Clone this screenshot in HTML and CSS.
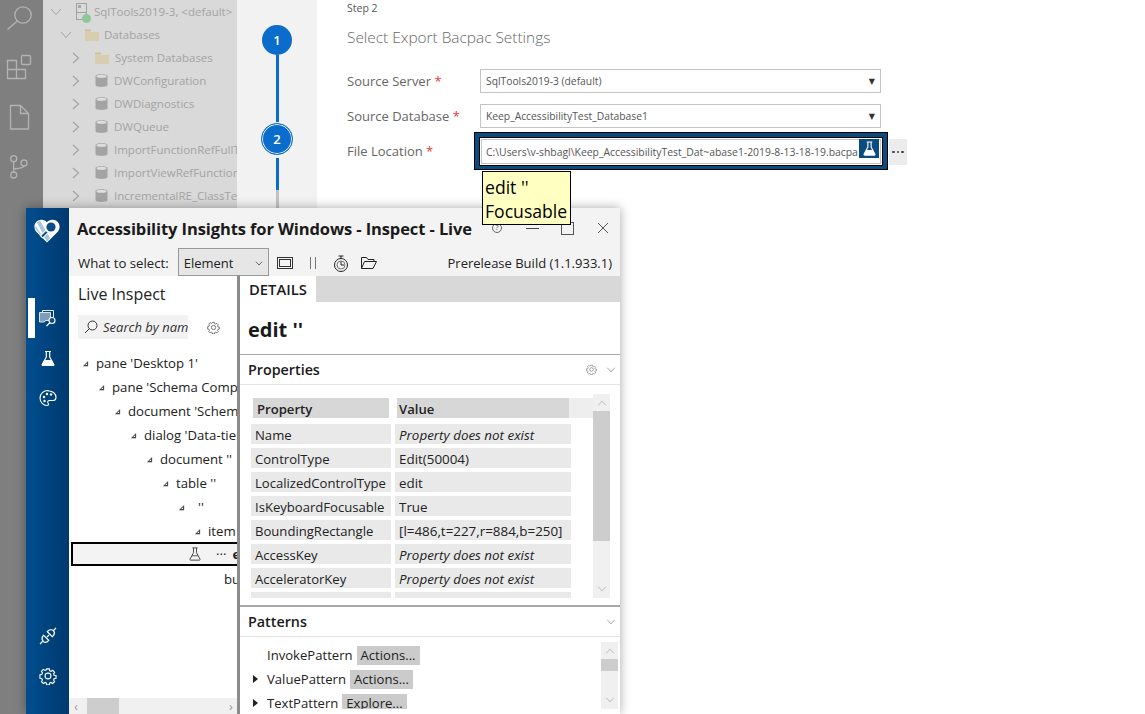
FILE: index.html
```html
<!DOCTYPE html>
<html lang="en">
<head>
<meta charset="utf-8">
<title>Accessibility Insights</title>
<link rel="stylesheet" href="styles.css">
</head>
<body>
<svg class="defs" width="0" height="0">
  <symbol id="flask" viewBox="0 0 16 16"><path d="M4.600 9.500h6.800l2.300 4.300c.3.600 0 1.200-.7 1.200H3c-.7 0-1-.6-.7-1.200z" fill="currentColor"/><path d="M5 1h6M6.300 1v5.500L2.300 13.800c-.4.700 0 1.200.7 1.200h10c.7 0 1.100-.5.700-1.200L9.700 6.500V1" fill="none" stroke="currentColor" stroke-width="1.200"/></symbol>
  <symbol id="flask-line" viewBox="0 0 16 16"><path d="M4.600 10h6.800" stroke="currentColor" fill="none"/><path d="M5 1h6M6.300 1v5.500L2.300 13.800c-.4.700 0 1.200.7 1.200h10c.7 0 1.100-.5.700-1.200L9.700 6.500V1" fill="none" stroke="currentColor" stroke-width="1.100"/></symbol>
  <symbol id="gear" viewBox="0 0 16 16"><path d="M6.600 1h2.800l.4 2 1.400.6 1.700-1.100 2 2-1.100 1.700.6 1.400 2 .4v2.800l-2 .4-.6 1.400 1.100 1.700-2 2-1.700-1.100-1.400.6-.4 2H6.600l-.4-2-1.400-.6-1.700 1.100-2-2 1.100-1.700-.6-1.400-2-.4V7l2-.4.6-1.400-1.100-1.700 2-2 1.700 1.100 1.400-.6z" transform="translate(1.200 .8) scale(.85)" fill="none" stroke="currentColor" stroke-width="1.150"/><circle cx="8" cy="8" r="2.600" fill="none" stroke="currentColor"/></symbol>
  <symbol id="cyl" viewBox="0 0 13 15"><path d="M.5 3C.5.500 12.500.500 12.500 3v9c0 2.500-12 2.500-12 0z" fill="#a3a3a3"/><ellipse cx="6.500" cy="3.200" rx="5" ry="1.500" fill="#dedede"/></symbol>
  <symbol id="folder" viewBox="0 0 14 12"><path d="M0 2h5l1 1h8v9H0z" fill="#d9cdb0"/><path d="M0 .5h5.500l1 1.500H0z" fill="#ccbf9f"/></symbol>
  <symbol id="tri" viewBox="0 0 8 8"><path d="M7 1v6H1z M5.800 3.600 3.600 5.800h2.200z" fill="#444" fill-rule="evenodd"/></symbol>
  <symbol id="chevR" viewBox="0 0 8 12"><path d="M1 1l5.500 5L1 11" fill="none" stroke="#a2a2a2" stroke-width="1.100"/></symbol>
  <symbol id="chevD" viewBox="0 0 12 8"><path d="M1 1l5 5.500L11 1" fill="none" stroke="currentColor" stroke-width="1"/></symbol>
</svg>

<div class="desktop">
  <aside class="activity">
    <svg class="act-icon" width="43" height="50" viewBox="0 0 43 50"><circle cx="23" cy="15" r="8.200"/><path d="M17.300 21 7.500 29.500"/></svg>
    <svg class="act-icon" width="43" height="50" viewBox="0 0 43 50"><path d="M7.500 10.500h9v18h-9zM7.500 19.500h18v9h-9"/><rect x="21.500" y="5.500" width="9" height="9" rx="1"/><path d="M16.500 10.500"/></svg>
    <svg class="act-icon" width="43" height="50" viewBox="0 0 43 50"><path d="M10.500 5.500h10l8 8v15.500h-18zM20.500 5.500v8h8"/></svg>
    <svg class="act-icon" width="43" height="50" viewBox="0 0 43 50"><circle cx="13.700" cy="8.700" r="3"/><circle cx="24" cy="13" r="3"/><circle cx="13.700" cy="25" r="3"/><path d="M13.700 11.700v10.300M14 18.800c5-.3 9.800-.5 10-2.800"/></svg>
  </aside>

  <nav class="tree">
    <div class="t-row t-server"><svg class="chev" width="12" height="8"><use href="#chevD"/></svg><span class="server-ic"><i class="srv-slot"></i><i class="srv-mid"></i><i class="dot"></i></span><span>SqlTools2019-3, &lt;default&gt;</span></div>
    <div class="t-row t-db"><svg class="chev" width="12" height="8"><use href="#chevD"/></svg><svg class="ic" width="14" height="12"><use href="#folder"/></svg><span>Databases</span></div>
    <div class="t-row t-item"><svg class="chev" width="8" height="12"><use href="#chevR"/></svg><svg class="ic" width="14" height="12"><use href="#folder"/></svg><span>System Databases</span></div>
    <div class="t-row t-item"><svg class="chev" width="8" height="12"><use href="#chevR"/></svg><svg class="ic db" width="13" height="15"><use href="#cyl"/></svg><span>DWConfiguration</span></div>
    <div class="t-row t-item"><svg class="chev" width="8" height="12"><use href="#chevR"/></svg><svg class="ic db" width="13" height="15"><use href="#cyl"/></svg><span>DWDiagnostics</span></div>
    <div class="t-row t-item"><svg class="chev" width="8" height="12"><use href="#chevR"/></svg><svg class="ic db" width="13" height="15"><use href="#cyl"/></svg><span>DWQueue</span></div>
    <div class="t-row t-item"><svg class="chev" width="8" height="12"><use href="#chevR"/></svg><svg class="ic db" width="13" height="15"><use href="#cyl"/></svg><span>ImportFunctionRefFullTest</span></div>
    <div class="t-row t-item"><svg class="chev" width="8" height="12"><use href="#chevR"/></svg><svg class="ic db" width="13" height="15"><use href="#cyl"/></svg><span>ImportViewRefFunctionTest</span></div>
    <div class="t-row t-item"><svg class="chev" width="8" height="12"><use href="#chevR"/></svg><svg class="ic db" width="13" height="15"><use href="#cyl"/></svg><span>IncrementalRE_ClassTest</span></div>
  </nav>

  <div class="stepper">
    <span class="step">1</span>
    <span class="line"></span>
    <span class="step step-cur">2</span>
    <span class="line line-short"></span>
    <span class="line line-gray"></span>
  </div>

  <main class="form">
    <div class="step-label">Step 2</div>
    <h1 class="form-title">Select Export Bacpac Settings</h1>
    <div class="field">
      <label class="f-label">Source Server <b>*</b></label>
      <div class="select"><span>SqlTools2019-3 (default)</span><em>▼</em></div>
    </div>
    <div class="field">
      <label class="f-label">Source Database <b>*</b></label>
      <div class="select"><span>Keep_AccessibilityTest_Database1</span><em>▼</em></div>
    </div>
    <div class="field field-file">
      <label class="f-label">File Location <b>*</b></label>
      <div class="focus-box">
        <div class="focus-inner">
          <div class="input-box"><span>C:\Users\v-shbagl\Keep_AccessibilityTest_Dat~abase1-2019-8-13-18-19.bacpac</span></div>
        </div>
        <span class="focus-flask"><svg width="15" height="15"><use href="#flask"/></svg></span>
      </div>
      <span class="more"><i></i><i></i><i></i></span>
    </div>
  </main>
</div>

<section class="window">
  <aside class="win-nav">
    <svg class="logo" width="26" height="24" viewBox="0 0 26 24"><path d="M13 23.500 2.500 13C-1.500 8.500.5 2 6 1c3-.5 5.500.5 7 2.500C14.500 1.500 17 .5 20 1c5.500 1 7.500 7.500 3.500 12z" fill="#fff"/><path d="M3 3.500 6 1.500 16 19l-3 4zM1 9l1-2 8 13-2-2z" fill="#a9c6de"/><path d="M13.500 12 7 18" stroke="#fff" stroke-width="4"/><path d="M14 11.500 8 17.500" stroke="#0b4d85" stroke-width="2"/><circle cx="17" cy="8" r="6.500" fill="#fff"/><circle cx="17" cy="8" r="4.600" fill="#0b4d85"/></svg>
    <div class="nav-item nav-active"><svg width="18" height="18" viewBox="0 0 18 18"><path d="M3.500 3.500V1.500h11v7" fill="none" stroke="#fff" stroke-width=".9"/><path d="M.5 3.500h11v8h-5l-1 1.500h-5z" fill="#7f9cb8" stroke="#fff" stroke-width=".8"/><circle cx="13" cy="11.500" r="3" fill="#0b4d85" stroke="#fff" stroke-width="1.100"/><path d="M10.800 13.800 7.500 17" stroke="#fff" stroke-width="1.200"/></svg></div>
    <div class="nav-item"><svg width="16" height="17"><use href="#flask"/></svg></div>
    <div class="nav-item"><svg width="18" height="18" viewBox="0 0 18 18"><path d="M9 1.500C4.500 1.500 1 4.800 1 9s3.500 7.500 7 7.500c1.800 0 1.800-1.500 1-2.500-.8-1.200 0-2.500 1.500-2.500h3.500c2 0 3-1.200 3-3 0-4-3.500-6.500-7-6.500z" fill="none" stroke="#fff" stroke-width="1.100"/><circle cx="5" cy="8" r="1.200" fill="#fff"/><circle cx="8" cy="5" r="1.200" fill="#fff"/><circle cx="12" cy="5.500" r="1.200" fill="#fff"/><circle cx="5.500" cy="12" r="1.200" fill="#fff"/></svg></div>
    <div class="nav-spacer"></div>
    <div class="nav-item"><svg width="18" height="18" viewBox="0 0 18 18"><path d="M1 17l2.500-2.500M17 1l-2.500 2.500M8 10l2-2M3.500 9.500l1.200-1.200 5 5-1.200 1.200c-1.200 1-3 1-4.200-.2-1.200-1.200-1.300-3.600-.8-4.800zM8.300 4.700 9.500 3.500c1.200-1 3.800-1 4.900.2 1.100 1.100 1.100 3.400.1 4.800l-1.200 1.200z" fill="none" stroke="#fff" stroke-width="1.200"/></svg></div>
    <div class="nav-item"><svg width="18" height="18"><use href="#gear"/></svg></div>
  </aside>

  <div class="win-main">
    <header class="titlebar">
      <h2 class="win-title">Accessibility Insights for Windows - Inspect - Live</h2>
      <div class="win-ctrl">
        <span class="help">?</span>
        <span class="wc wc-min"></span>
        <span class="wc wc-max"></span>
        <svg class="wc-x" width="12" height="12" viewBox="0 0 12 12"><path d="M1 1l10 10M11 1 1 11" stroke="#555" fill="none"/></svg>
      </div>
    </header>
    <div class="toolbar">
      <span class="tb-label">What to select:</span>
      <div class="combo"><span>Element</span><svg width="8" height="5" viewBox="0 0 12 8"><use href="#chevD"/></svg></div>
      <svg class="tb-ic ic-rect" width="16" height="12" viewBox="0 0 16 12"><rect x=".5" y=".5" width="15" height="11" fill="none" stroke="#333"/><rect x="2.500" y="2.500" width="11" height="7" fill="none" stroke="#333"/></svg>
      <svg class="tb-ic ic-pause" width="8" height="12" viewBox="0 0 8 12"><path d="M1.500 0v12M6.500 0v12" stroke="#777"/></svg>
      <svg class="tb-ic ic-timer" width="16" height="17" viewBox="0 0 16 17"><circle cx="8" cy="10" r="6.500" fill="none" stroke="#222"/><circle cx="8" cy="10" r="4" fill="none" stroke="#777"/><path d="M5.500 1h5M8 1v2.500M8 6.500V10h3" stroke="#222" fill="none"/></svg>
      <svg class="tb-ic" width="16" height="12" viewBox="0 0 16 12"><path d="M.5 11.500V.5h5l1.500 2h6v2M.5 11.500h11.500l3.500-7H3.500z" fill="none" stroke="#222"/></svg>
      <span class="build">Prerelease Build (1.1.933.1)</span>
    </div>
    <div class="panes">
      <div class="left-pane">
        <h3 class="live">Live Inspect</h3>
        <div class="search-row">
          <div class="search"><svg width="14" height="14" viewBox="0 0 14 14"><circle cx="8.500" cy="5.500" r="4.500" fill="none" stroke="#333"/><path d="M5.500 8.500 1 13" stroke="#333"/></svg><span>Search by name</span></div>
          <svg class="search-gear" width="13" height="13"><use href="#gear"/></svg>
        </div>
        <div class="ltree">
          <div class="lt i0"><svg width="7" height="7"><use href="#tri"/></svg><span>pane 'Desktop 1'</span></div>
          <div class="lt i1"><svg width="7" height="7"><use href="#tri"/></svg><span>pane 'Schema Compare'</span></div>
          <div class="lt i2"><svg width="7" height="7"><use href="#tri"/></svg><span>document 'Schema Compare'</span></div>
          <div class="lt i3"><svg width="7" height="7"><use href="#tri"/></svg><span>dialog 'Data-tier'</span></div>
          <div class="lt i4"><svg width="7" height="7"><use href="#tri"/></svg><span>document ''</span></div>
          <div class="lt i5"><svg width="7" height="7"><use href="#tri"/></svg><span>table ''</span></div>
          <div class="lt i6"><svg width="7" height="7"><use href="#tri"/></svg><span class="quote">''</span></div>
          <div class="lt i7"><svg width="7" height="7"><use href="#tri"/></svg><span>item ''</span></div>
          <div class="lt lt-sel"><svg class="sel-flask" width="14" height="14"><use href="#flask-line"/></svg><span class="sel-dots">···</span><span class="sel-text">edit ''</span></div>
          <div class="lt i9"><span>button ''</span></div>
        </div>
        <div class="hscroll"><span class="sb-arrow">‹</span><span class="hthumb"></span><span class="sb-arrow sb-end">›</span></div>
      </div>
      <div class="splitter"></div>
      <div class="right-pane">
        <div class="tabs"><span class="tab">DETAILS</span></div>
        <div class="el-title">edit ''</div>
        <div class="sec-head sec-props"><span>Properties</span><svg class="sec-gear" width="11" height="11"><use href="#gear"/></svg><svg class="sec-chev" width="10" height="6"><use href="#chevD"/></svg></div>
        <div class="props">
          <div class="ptable">
            <div class="p-headrow"><span class="ph ph1">Property</span><span class="ph ph2">Value</span></div>
            <div class="pr"><span class="pk">Name</span><span class="pv it">Property does not exist</span></div>
            <div class="pr"><span class="pk">ControlType</span><span class="pv">Edit(50004)</span></div>
            <div class="pr"><span class="pk">LocalizedControlType</span><span class="pv">edit</span></div>
            <div class="pr"><span class="pk">IsKeyboardFocusable</span><span class="pv">True</span></div>
            <div class="pr"><span class="pk">BoundingRectangle</span><span class="pv">[l=486,t=227,r=884,b=250]</span></div>
            <div class="pr"><span class="pk">AccessKey</span><span class="pv it">Property does not exist</span></div>
            <div class="pr"><span class="pk">AcceleratorKey</span><span class="pv it">Property does not exist</span></div>
            <div class="pr"><span class="pk">ItemType</span><span class="pv it">Property does not exist</span></div>
          </div>
          <div class="vscroll vs-props"><svg width="10" height="6"><use href="#chevD"/></svg><span class="vthumb"></span><svg width="10" height="6"><use href="#chevD"/></svg></div>
        </div>
        <div class="sec-head sec-patterns"><span>Patterns</span><svg class="sec-chev" width="10" height="6"><use href="#chevD"/></svg></div>
        <div class="patterns">
          <div class="plist">
            <div class="pat"><span class="pat-name pat-first">InvokePattern</span><span class="pbtn">Actions...</span></div>
            <div class="pat"><i class="caret"></i><span class="pat-name">ValuePattern</span><span class="pbtn">Actions...</span></div>
            <div class="pat"><i class="caret"></i><span class="pat-name">TextPattern</span><span class="pbtn">Explore...</span></div>
          </div>
          <div class="vscroll vs-pat"><svg width="10" height="6"><use href="#chevD"/></svg><span class="vthumb"></span><svg width="10" height="6"><use href="#chevD"/></svg></div>
        </div>
      </div>
    </div>
  </div>
</section>

<div class="tooltip">edit ''<br>Focusable</div>
</body>
</html>
```
FILE: styles.css
```css
* { box-sizing: border-box; }
html, body { margin: 0; height: 714px; overflow: hidden; background: #fff; }
body { position: relative; width: 1145px; font-family: "Open Sans", "Noto Sans", sans-serif; color: #222; }
.defs { position: absolute; }

/* background application */
.desktop { display: flex; height: 714px; }
.activity { width: 43px; background: #7f7f7f; display: flex; flex-direction: column; flex: none; }
.act-icon { display: block; flex: none; fill: none; stroke: #b3b3b3; stroke-width: 1.3; }
.tree { width: 194px; flex: none; background: #d9d9d9; color: #a3a3a3; font-size: 11.500px; overflow: hidden; white-space: nowrap; }
.t-row { height: 23px; display: flex; align-items: center; }
.t-row .ic { margin-right: 6px; flex: none; }
.chev { flex: none; color: #a2a2a2; }
.t-server { padding-left: 7px; }
.t-server .chev { margin-right: 14px; }
.server-ic { width: 11px; height: 17px; border: 1px solid #a0a0a0; margin-right: 7px; position: relative; flex: none; }
.srv-slot { position: absolute; left: 1px; top: 1px; width: 3px; height: 3px; background: #a8a8a8; }
.srv-mid { position: absolute; left: 0; right: 0; top: 8px; height: 1px; background: #a0a0a0; }
.dot { position: absolute; left: 5px; top: 10px; width: 9px; height: 9px; border-radius: 50%; background: #8fc79a; }
.t-db { padding-left: 17px; }
.t-db .chev { margin-right: 13px; }
.t-db .ic { margin-right: 5px; }
.t-item { padding-left: 29px; }
.t-item .chev { margin-right: 15px; }
.stepper { width: 80px; flex: none; background: #f2f2f2; display: flex; flex-direction: column; align-items: center; padding-top: 25px; }
.step { width: 30px; height: 30px; border-radius: 50%; background: #0a6ccb; color: #fff; font-size: 13px; font-weight: 600; display: flex; align-items: center; justify-content: center; flex: none; }
.step-cur { width: 32px; height: 32px; border: 1px solid #0a6ccb; box-shadow: inset 0 0 0 1px #fff; margin: 1px 0; }
.line { width: 3px; height: 67px; background: #0a6ccb; flex: none; }
.line-short { height: 32px; margin-top: 2px; }
.line-gray { height: 18px; background: #c2c2c2; }
.form { flex: 1; padding: 0 0 0 30px; color: #666; }
.step-label { font-size: 10.500px; height: 16px; line-height: 16px; color: #555; }
.form-title { margin: 10px 0 19px; font-size: 15.400px; line-height: 24px; font-weight: 300; color: #666; }
.field { display: flex; align-items: center; height: 24px; margin-bottom: 11px; }
.f-label { width: 133px; font-size: 13px; color: #666; flex: none; white-space: nowrap; }
.f-label b { color: #e33; font-weight: 400; }
.select { width: 401px; height: 24px; border: 1px solid #c4c4c4; display: flex; align-items: center; justify-content: space-between; padding: 0 5px; font-size: 10.300px; color: #555; }
.select em { font-style: normal; font-size: 8px; color: #333; font-family: "DejaVu Sans", sans-serif; }
.field-file { position: relative; }
.focus-box { position: absolute; left: 127px; top: -7px; width: 414px; height: 38px; border: 1px solid #000; background: #0a4b80; padding: 4px 4px 3px; display: flex; }
.focus-inner { flex: 1; min-width: 0; border: 1px solid #000; background: #fff; padding: 1px; display: flex; }
.input-box { flex: 1; min-width: 0; border: 1px solid #c4c4c4; background: #fff; padding: 0 22px 0 4px; font-size: 10.400px; color: #555; display: flex; align-items: center; overflow: hidden; white-space: nowrap; }
.input-box span { overflow: hidden; }
.focus-flask { position: absolute; right: 8px; top: 6px; width: 20px; height: 19px; background: #0a4b80; color: #fff; display: flex; align-items: center; justify-content: center; }
.more { position: absolute; left: 542px; top: 0; width: 18px; height: 26px; background: #ececec; display: flex; align-items: center; justify-content: center; gap: 2px; }
.more i { width: 2.500px; height: 2.500px; border-radius: 50%; background: #444; }

/* tooltip */
.tooltip { position: absolute; left: 482px; top: 171px; width: 89px; height: 54px; background: #ffffc2; border: 1px solid #000; color: #000; font-size: 17.600px; line-height: 24px; padding: 3px 0 0 2px; white-space: nowrap; }

/* window */
.window { position: absolute; left: 26px; top: 208px; width: 594px; height: 506px; display: flex; background: #fff; box-shadow: 0 0 10px rgba(0,0,0,.35); overflow: hidden; }
.win-nav { width: 43px; flex: none; background: linear-gradient(90deg, #004e8f, #00396e); display: flex; flex-direction: column; align-items: center; padding-top: 11px; color: #fff; position: relative; }
.logo { display: block; margin-bottom: 55px; margin-left: -1px; flex: none; }
.nav-item { width: 43px; height: 40px; display: flex; align-items: center; justify-content: center; flex: none; color: #fff; }
.nav-item svg { margin-left: 1px; }
.nav-active { background: linear-gradient(#fff,#fff) 2px 0/7px 100% no-repeat; }
.nav-spacer { flex: 1; }
.nav-item:last-child { margin-bottom: 18px; }
.win-main { flex: 1; min-width: 0; display: flex; flex-direction: column; background: #f3f3f3; }
.titlebar { height: 42px; flex: none; display: flex; align-items: center; padding: 0 11px 0 8px; justify-content: space-between; position: relative; }
.win-title { margin: -2px 0 0; font-size: 16.500px; font-weight: 700; color: #1a1a1a; white-space: nowrap; letter-spacing: -.1px; }
.win-ctrl { display: flex; align-items: center; position: absolute; right: 11px; top: 14px; height: 12px; }
.help { width: 10px; height: 10px; border: 1px solid #666; border-radius: 50%; font-size: 7px; line-height: 8px; text-align: center; color: #555; margin-right: 24px; }
.wc { display: block; }
.wc-min { width: 13px; height: 1px; background: #444; margin-right: 22px; }
.wc-max { width: 13px; height: 13px; border: 1px solid #555; margin-right: 23px; }
.toolbar { height: 26px; flex: none; display: flex; align-items: center; padding: 0 8px 0 9px; color: #222; white-space: nowrap; }
.tb-label { font-size: 13.200px; margin-right: 9px; }
.combo { width: 91px; height: 28px; margin: -2px 8px 0 0; border: 1px solid #999; background: #e6e6e6; display: flex; align-items: center; justify-content: space-between; padding: 2px 5px 0; font-size: 13px; flex: none; }
.tb-ic { flex: none; margin-right: 12px; }
.ic-rect { margin-right: 16px; }
.ic-pause { margin-right: 16px; }
.build { margin-left: auto; font-size: 13px; }
.panes { flex: 1; min-height: 0; display: flex; background: #fff; }
.left-pane { width: 168px; flex: none; position: relative; overflow: hidden; display: flex; flex-direction: column; }
.live { margin: 0; padding: 7px 0 0 9px; height: 39px; font-weight: 400; font-size: 16px; line-height: 22px; color: #222; }
.search-row { display: flex; align-items: center; height: 24px; padding-left: 9px; }
.search { width: 110px; height: 24px; background: #f2f2f2; display: flex; align-items: center; gap: 5px; padding-left: 6px; font-size: 13px; font-style: italic; white-space: nowrap; overflow: hidden; flex: none; color: #333; }
.search svg { flex: none; }
.search-gear { margin-left: 19px; color: #555; }
.ltree { padding-top: 12px; flex: 1; }
.lt { height: 24px; display: flex; align-items: center; font-size: 13.200px; white-space: nowrap; gap: 7px; color: #222; }
.lt svg { flex: none; }
.i0 { padding-left: 13px; }
.i1 { padding-left: 29px; }
.i2 { padding-left: 45px; }
.i3 { padding-left: 61px; }
.i4 { padding-left: 77px; }
.i5 { padding-left: 93px; }
.i6 { padding-left: 109px; }
.i7 { padding-left: 125px; }
.i9 { padding-left: 155px; }
.quote { margin-left: 6px; }
.lt-sel { margin: -1px 0 1px 2px; width: 190px; border: 2px solid #000; background: #f3f3f3; padding-left: 115px; gap: 0; overflow: hidden; }
.sel-dots { margin-left: 14px; margin-right: 6px; }
.sel-flask { color: #444; }
.sel-text { font-weight: 700; }
.hscroll { position: absolute; left: 0; right: 0; bottom: 0; height: 16px; background: #f0f0f0; display: flex; align-items: center; font-size: 13px; color: #999; padding-left: 5px; }
.hthumb { position: absolute; left: 18px; width: 32px; height: 16px; background: #cdcdcd; }
.sb-end { margin-left: auto; margin-right: 4px; }
.splitter { width: 3px; flex: none; background: #8c8c8c; }
.right-pane { flex: 1; min-width: 0; display: flex; flex-direction: column; overflow: hidden; }
.tabs { height: 26px; flex: none; background: #d8d8d8; display: flex; }
.tab { background: #fff; width: 76px; height: 26px; font-size: 14.800px; font-weight: 600; line-height: 27px; padding-left: 9px; color: #1a1a1a; }
.el-title { height: 53px; flex: none; padding: 9px 0 0 8px; font-size: 20px; line-height: 38px; font-weight: 700; color: #1a1a1a; border-bottom: 1px solid #a8a8a8; }
.sec-head { display: flex; align-items: center; flex: none; padding: 0 4px 0 8px; font-size: 14.300px; font-weight: 600; color: #1a1a1a; }
.sec-head span { flex: 1; }
.sec-props { height: 30px; border-bottom: 1px solid #e4e4e4; }
.sec-gear { color: #777; margin-right: 9px; }
.sec-chev { color: #888; flex: none; }
.props { height: 222px; flex: none; display: flex; padding: 9px 10px 9px 11px; border-bottom: 2px solid #a8a8a8; }
.ptable { width: 342px; height: 204px; overflow: hidden; flex: none; font-size: 13.100px; color: #222; }
.p-headrow { height: 26px; margin-top: 4px; display: flex; gap: 8px; padding-left: 2px; background: linear-gradient(#eeeeee,#eeeeee) 318px 0/24px 20px no-repeat; }
.ph { height: 20px; background: #d7d7d7; font-weight: 600; line-height: 22px; padding-left: 4px; flex: none; }
.ph1 { width: 136px; }
.ph2 { width: 172px; padding-left: 2px; }
.pr { height: 24px; display: flex; gap: 4px; white-space: nowrap; }
.pk, .pv { height: 20px; line-height: 22px; background: #e9e9e9; padding-left: 4px; flex: none; overflow: hidden; }
.pk { width: 140px; }
.pv { width: 176px; font-size: 13.400px; }
.it { font-style: italic; }
.vscroll { background: #f0f0f0; width: 17px; flex: none; position: relative; display: flex; flex-direction: column; align-items: center; justify-content: space-between; color: #aaa; padding: 6px 0; }
.vscroll svg:first-child { transform: rotate(180deg); }
.vthumb { position: absolute; left: 0; right: 0; background: #cdcdcd; }
.vs-props { height: 204px; }
.vs-props .vthumb { top: 17px; height: 130px; }
.sec-patterns { height: 30px; border-bottom: 1px solid #e4e4e4; }
.patterns { flex: 1; min-height: 0; display: flex; justify-content: space-between; padding: 5px 2px 6px 0; }
.plist { font-size: 13.100px; height: 67px; overflow: hidden; padding: 1px 0 0 13px; flex: 1; color: #222; }
.pat { height: 24px; display: flex; align-items: center; white-space: nowrap; }
.caret { width: 0; height: 0; border-left: 5px solid #222; border-top: 4px solid transparent; border-bottom: 4px solid transparent; margin-right: 9px; flex: none; }
.pat-first { margin-left: 14px; }
.pbtn { background: #cbcbcb; margin-left: 4px; height: 19px; line-height: 19px; padding: 0 4px; }
.vs-pat { height: 67px; }
.vs-pat .vthumb { top: 17px; height: 12px; }
```
